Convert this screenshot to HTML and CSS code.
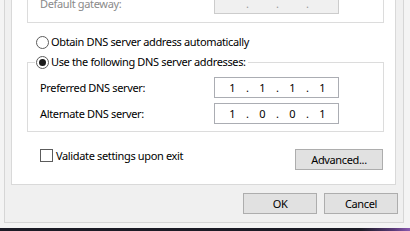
FILE: index.html
```html
<!DOCTYPE html>
<html lang="en">
<head>
    <meta charset="UTF-8">
    <meta name="viewport" content="width=device-width, initial-scale=1.0">
    <title>Internet Protocol Version 4 (TCP/IPv4) Properties</title>
    <link rel="stylesheet" href="styles.css">
</head>
<body>
    <div class="screen">
        <div class="client">
            <div class="tab-page">
                <!-- IP address group (cut off at the top) -->
                <div class="group group-ip">
                    <div class="field-row">
                        <span class="field-label disabled">Default gateway:</span>
                        <div class="ip-box disabled">
                            <span></span><span class="dot">.</span><span></span><span class="dot">.</span><span></span><span class="dot">.</span><span></span>
                        </div>
                    </div>
                </div>

                <label class="radio-row obtain-row">
                    <span class="radio"></span>
                    <span>Obtain DNS server address automatically</span>
                </label>

                <!-- DNS group -->
                <fieldset class="group group-dns">
                    <legend>
                        <label class="radio-row">
                            <span class="radio checked"></span>
                            <span>Use the following DNS server addresses:</span>
                        </label>
                    </legend>
                    <div class="field-row">
                        <span class="field-label">Preferred DNS server:</span>
                        <div class="ip-box">
                            <span>1</span><span class="dot">.</span><span>1</span><span class="dot">.</span><span>1</span><span class="dot">.</span><span>1</span>
                        </div>
                    </div>
                    <div class="field-row">
                        <span class="field-label">Alternate DNS server:</span>
                        <div class="ip-box">
                            <span>1</span><span class="dot">.</span><span>0</span><span class="dot">.</span><span>0</span><span class="dot">.</span><span>1</span>
                        </div>
                    </div>
                </fieldset>

                <div class="check-row">
                    <label class="check-label">
                        <span class="checkbox"></span>
                        <span>Validate settings upon exit</span>
                    </label>
                    <button type="button" class="btn btn-advanced">Advanced...</button>
                </div>
            </div>

            <!-- Dialog buttons -->
            <div class="dialog-buttons">
                <button type="button" class="btn btn-dialog">OK</button>
                <button type="button" class="btn btn-dialog">Cancel</button>
            </div>
        </div>
        <div class="taskbar"></div>
    </div>
</body>
</html>
```

FILE: styles.css
```css
* {
    box-sizing: border-box;
}

body {
    margin: 0;
    font-family: "Noto Sans", "Open Sans", Arial, sans-serif;
    font-size: 11px;
    letter-spacing: -0.35px;
    color: #000;
    background-color: #f4f4f4;
}

.screen {
    width: 410px;
    height: 231px;
    overflow: hidden;
    display: flex;
    flex-direction: column;
}

/* Window client area */
.client {
    height: 223px;
    width: 400px;
    margin-left: 4px;
    background-color: #f0f0f0;
    border-left: 1px solid #d6d6d6;
    border-right: 1px solid #d6d6d6;
    border-bottom: 1px solid #d6d6d6;
    display: flex;
    flex-direction: column;
}

.taskbar {
    margin-top: 5px;
    height: 3px;
    background: linear-gradient(to right, #1c1c26 0%, #1c1c26 88%, #5a3a78 96%, #8a5ab0 100%);
}

/* Tab page */
.tab-page {
    margin: -30px 7px 0 6px;
    background-color: #fff;
    border: 1px solid #d9d9d9;
    padding: 0 12px 14px 0;
}

/* Group boxes */
.group {
    margin: 0 -1px 0 15px;
    border: 1px solid #dcdcdc;
    width: 357px;
}

.group-ip {
    padding: 21px 44px 8px 12px;
}

.group-dns {
    margin-top: 4px;
    padding: 7px 44px 7px 12px;
    min-width: 0;
}

.group-dns legend {
    margin-left: -5px;
    padding: 0 2px 0 1px;
}

.field-row {
    height: 21px;
    display: flex;
    align-items: center;
    justify-content: space-between;
}

.field-row + .field-row {
    margin-top: 5px;
}

.field-label {
    line-height: 16px;
}

.disabled {
    color: #8a8a8a;
}

/* IP address control */
.ip-box {
    width: 125px;
    height: 21px;
    border: 1px solid #abadb3;
    background-color: #fff;
    padding-left: 10px;
    display: grid;
    grid-template-columns: repeat(7, 15px);
    justify-items: center;
    align-items: center;
    line-height: 16px;
    letter-spacing: 0;
}

.ip-box.disabled {
    background-color: #f0f0f0;
    border-color: #cccccc;
    color: #9a9a9a;
}

/* Radio buttons */
.radio-row {
    display: flex;
    align-items: center;
    line-height: 16px;
    height: 16px;
}

.obtain-row {
    margin: 11px 0 0 24px;
}

.radio {
    width: 13px;
    height: 13px;
    border: 1px solid #5c5c5c;
    border-radius: 50%;
    background-color: #fff;
    margin-right: 2px;
    display: flex;
    align-items: center;
    justify-content: center;
}

.radio.checked::after {
    content: "";
    width: 7px;
    height: 7px;
    border-radius: 50%;
    background-color: #1a1a1a;
}

/* Checkbox row */
.check-row {
    margin-top: 17px;
    padding-left: 28px;
    display: flex;
    justify-content: space-between;
    align-items: flex-start;
}

.check-label {
    display: flex;
    align-items: center;
    height: 13px;
    line-height: 13px;
}

.checkbox {
    width: 13px;
    height: 13px;
    border: 1px solid #5c5c5c;
    background-color: #fff;
    margin-right: 3px;
}

/* Buttons */
.btn {
    font-family: inherit;
    font-size: inherit;
    letter-spacing: inherit;
    color: #000;
    height: 21px;
    padding: 0;
    background-color: #e1e1e1;
    border: 1px solid #adadad;
    border-radius: 0;
}

.btn-advanced {
    width: 88px;
}

.dialog-buttons {
    margin-top: 8px;
    padding-right: 5px;
    display: flex;
    justify-content: flex-end;
    gap: 7px;
}

.btn-dialog {
    width: 74px;
}
```
